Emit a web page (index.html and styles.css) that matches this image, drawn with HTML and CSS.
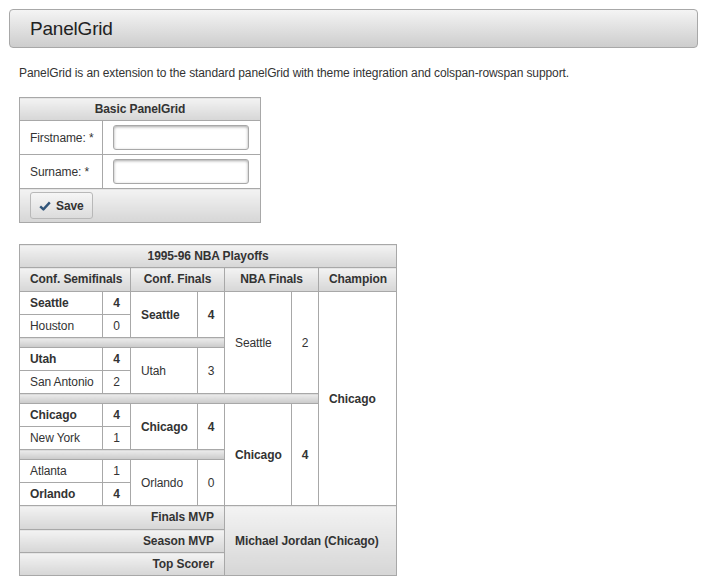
FILE: index.html
```html
<!DOCTYPE html>
<html lang="en">
<head>
    <meta charset="UTF-8">
    <title>PanelGrid</title>
    <link rel="stylesheet" href="styles.css">
</head>
<body>
    <div class="page">
        <div class="title-bar">
            <h1>PanelGrid</h1>
        </div>

        <div class="content">
            <p class="intro">PanelGrid is an extension to the standard panelGrid with theme integration and colspan-rowspan support.</p>

            <!-- Basic form grid -->
            <table class="grid basic-grid">
                <colgroup>
                    <col class="label-col">
                    <col class="field-col">
                </colgroup>
                <tr>
                    <th colspan="2" class="head">Basic PanelGrid</th>
                </tr>
                <tr class="form-row">
                    <td>Firstname: *</td>
                    <td><input type="text" class="text-input"></td>
                </tr>
                <tr class="form-row">
                    <td>Surname: *</td>
                    <td><input type="text" class="text-input"></td>
                </tr>
                <tr class="form-row">
                    <td colspan="2" class="head footer">
                        <button class="button">
                            <svg class="check" width="12" height="10" viewBox="0 0 12 10">
                                <path d="M1.2 5.4 L4.4 8.4 L10.8 1.4" fill="none" stroke="#31557a" stroke-width="2.4" stroke-linejoin="round"/>
                            </svg>
                            Save
                        </button>
                    </td>
                </tr>
            </table>

            <!-- Playoffs bracket -->
            <table class="grid bracket">
                <colgroup>
                    <col class="c-team">
                    <col class="c-score">
                    <col class="c-team2">
                    <col class="c-score2">
                    <col class="c-team2">
                    <col class="c-score2">
                    <col class="c-champ">
                </colgroup>
                <tr>
                    <th colspan="7" class="head">1995-96 NBA Playoffs</th>
                </tr>
                <tr>
                    <th colspan="2" class="head sub">Conf. Semifinals</th>
                    <th colspan="2" class="head sub">Conf. Finals</th>
                    <th colspan="2" class="head sub">NBA Finals</th>
                    <th class="head sub">Champion</th>
                </tr>
                <tr>
                    <td class="win">Seattle</td>
                    <td class="score win">4</td>
                    <td rowspan="2" class="win">Seattle</td>
                    <td rowspan="2" class="score win">4</td>
                    <td rowspan="5">Seattle</td>
                    <td rowspan="5" class="score">2</td>
                    <td rowspan="11" class="win">Chicago</td>
                </tr>
                <tr>
                    <td>Houston</td>
                    <td class="score">0</td>
                </tr>
                <tr class="gap"><td colspan="4" class="head"></td></tr>
                <tr>
                    <td class="win">Utah</td>
                    <td class="score win">4</td>
                    <td rowspan="2">Utah</td>
                    <td rowspan="2" class="score">3</td>
                </tr>
                <tr>
                    <td>San Antonio</td>
                    <td class="score">2</td>
                </tr>
                <tr class="gap"><td colspan="6" class="head"></td></tr>
                <tr>
                    <td class="win">Chicago</td>
                    <td class="score win">4</td>
                    <td rowspan="2" class="win">Chicago</td>
                    <td rowspan="2" class="score win">4</td>
                    <td rowspan="5" class="win">Chicago</td>
                    <td rowspan="5" class="score win">4</td>
                </tr>
                <tr>
                    <td>New York</td>
                    <td class="score">1</td>
                </tr>
                <tr class="gap"><td colspan="4" class="head"></td></tr>
                <tr>
                    <td>Atlanta</td>
                    <td class="score">1</td>
                    <td rowspan="2">Orlando</td>
                    <td rowspan="2" class="score">0</td>
                </tr>
                <tr>
                    <td class="win">Orlando</td>
                    <td class="score win">4</td>
                </tr>
                <tr>
                    <td colspan="4" class="head award first">Finals MVP</td>
                    <td colspan="3" rowspan="3" class="head winner">Michael Jordan (Chicago)</td>
                </tr>
                <tr>
                    <td colspan="4" class="head award">Season MVP</td>
                </tr>
                <tr>
                    <td colspan="4" class="head award">Top Scorer</td>
                </tr>
            </table>
        </div>
    </div>
</body>
</html>
```

FILE: styles.css
```css
body {
    margin: 0;
    background: #fff;
    color: #333;
    font-family: "Liberation Sans", Arial, Helvetica, sans-serif;
    font-size: 12px;
    letter-spacing: -0.1px;
}

.page {
    padding: 9px 17px 10px 9px;
}

.title-bar {
    height: 37px;
    border: 1px solid #a8a8a8;
    border-radius: 4px;
    background: linear-gradient(to bottom, #f4f4f4, #cdcdcd);
    padding-left: 20px;
    display: flex;
    align-items: center;
}

.title-bar h1 {
    margin: 0;
    font-size: 19px;
    font-weight: normal;
    color: #222;
    letter-spacing: -0.2px;
}

.content {
    padding: 0 10px;
}

.intro {
    margin: 18px 0 17px;
    line-height: 14px;
}

.grid {
    border-collapse: collapse;
    table-layout: fixed;
}

.grid th,
.grid td {
    border: 1px solid #a8a8a8;
    padding: 4px 10px;
    line-height: 14px;
    text-align: left;
    font-weight: normal;
    white-space: nowrap;
}

.grid .head {
    background: linear-gradient(to bottom, #f3f3f3, #d6d6d6);
    color: #333;
    font-weight: bold;
}

.grid th.head {
    text-align: center;
}

/* basic form grid */
.basic-grid {
    width: 241px;
}

.label-col {
    width: 83px;
}

.field-col {
    width: 158px;
}

.form-row td {
    height: 34px;
    padding-top: 0;
    padding-bottom: 0;
    box-sizing: border-box;
}

.text-input {
    box-sizing: border-box;
    width: 136px;
    height: 25px;
    border: 1px solid #a8a8a8;
    border-radius: 3px;
    box-shadow: inset 0 1px 3px rgba(0, 0, 0, 0.35);
    background: #fff;
    display: block;
    font-family: inherit;
}

.footer {
    padding-left: 10px;
}

.button {
    display: flex;
    align-items: center;
    gap: 5px;
    height: 27px;
    width: 63px;
    padding: 0 0 0 8px;
    border: 1px solid #b8b8b8;
    border-radius: 3px;
    background: linear-gradient(to bottom, #f6f6f6, #dcdcdc);
    color: #333;
    font-family: inherit;
    font-size: 12px;
    font-weight: bold;
    letter-spacing: -0.1px;
    cursor: pointer;
}

.check {
    display: block;
}

/* playoffs bracket */
.bracket {
    width: 377px;
    margin-top: 21px;
}

.c-team {
    width: 83px;
}

.c-score {
    width: 28px;
}

.c-team2 {
    width: 67px;
}

.c-score2 {
    width: 27px;
}

.c-champ {
    width: 78px;
}

.bracket th.sub {
    padding-bottom: 5px;
}

.bracket td.score {
    text-align: center;
    padding-left: 0;
    padding-right: 0;
}

.bracket .win {
    font-weight: bold;
}

.bracket .gap td {
    height: 10px;
    padding: 0;
    box-sizing: border-box;
    background: linear-gradient(to bottom, #ececec, #c9c9c9);
}

.bracket td.award {
    text-align: right;
}

.bracket td.award.first {
    padding-bottom: 5px;
}

.bracket td.winner {
    text-align: left;
}
```
